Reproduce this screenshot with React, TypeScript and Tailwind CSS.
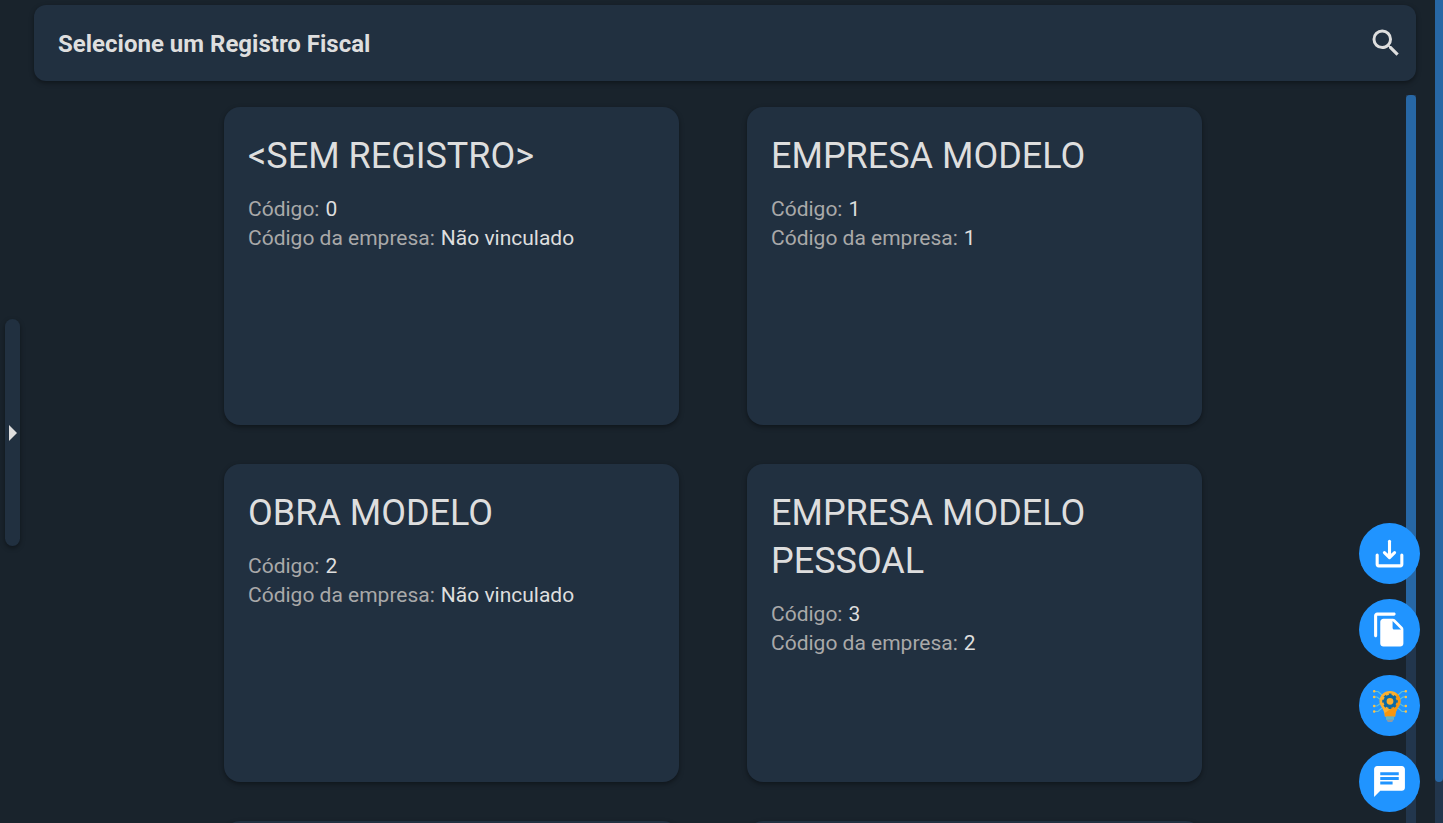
import { MdChat, MdSearch } from "react-icons/md";

type Registro = { nome: string; codigo: number; empresa: string };

const registros: Registro[] = [
  { nome: "<SEM REGISTRO>", codigo: 0, empresa: "Não vinculado" },
  { nome: "EMPRESA MODELO", codigo: 1, empresa: "1" },
  { nome: "OBRA MODELO", codigo: 2, empresa: "Não vinculado" },
  { nome: "EMPRESA MODELO PESSOAL", codigo: 3, empresa: "2" },
];

const surface = "bg-[#213040] shadow-[0_2px_5px_rgba(0,0,0,0.4)]";

function RegistroCard({ registro }: { registro: Registro }) {
  return (
    <button
      type="button"
      className={`flex min-h-[318px] cursor-pointer flex-col items-start rounded-2xl px-6 py-[25px] text-left ${surface}`}
    >
      <h2 className="text-4xl leading-[48px] text-[#dedede]">{registro.nome}</h2>
      <dl className="mt-[15px] text-[21px] leading-[29px] text-[#a9a9a9]">
        <div className="flex gap-[6px]">
          <dt>Código:</dt>
          <dd className="text-[#dedede]">{registro.codigo}</dd>
        </div>
        <div className="flex gap-[6px]">
          <dt>Código da empresa:</dt>
          <dd className="text-[#dedede]">{registro.empresa}</dd>
        </div>
      </dl>
    </button>
  );
}

function DownloadIcon() {
  return (
    <svg viewBox="0 0 24 24" className="size-[37px]" fill="none" stroke="currentColor" strokeWidth="2" strokeLinecap="round" strokeLinejoin="round">
      <path d="M4 13v6a1 1 0 0 0 1 1h14a1 1 0 0 0 1-1v-6" />
      <path d="M12 4v10" />
      <path d="M8.7 11.4 12 14.7l3.3-3.3" />
      <path d="M10.5 12.5h3L12 14.2z" fill="currentColor" strokeWidth="0.6" />
    </svg>
  );
}

function CopyIcon() {
  return (
    <svg viewBox="0 0 24 24" className="size-[37px]" fill="currentColor">
      <path d="M15 1H4c-1.1 0-2 .9-2 2v13c0 .55.45 1 1 1s1-.45 1-1V3h11c.55 0 1-.45 1-1s-.45-1-1-1z" />
      <path d="M15.59 5.59l4.83 4.83c.37.37.58.88.58 1.41V21c0 1.1-.9 2-2 2H7.99C6.89 23 6 22.1 6 21l.01-14c0-1.1.89-2 1.99-2h6.17c.53 0 1.04.21 1.42.59zM15 12h4.5L14 6.5V11c0 .55.45 1 1 1z" />
    </svg>
  );
}

function IdeaIcon() {
  return (
    <svg viewBox="0 0 36 36" className="size-9">
      <g fill="none" stroke="#5fc3dc" strokeWidth="1.1">
        <path d="M3 3.5h3l4 3.5M3 9h2l3 2.2h2M3 18h2l3-2.2h2M3 23.5h3l4-3.5" />
        <path d="M33 3.5h-3l-4 3.5M33 9h-2l-3 2.2h-2M33 18h-2l-3-2.2h-2M33 23.5h-3l-4-3.5" />
      </g>
      <g fill="#ffc043">
        <rect x="1" y="2" width="2.4" height="2.4" rx="1" />
        <rect x="1" y="7.8" width="2.4" height="2.4" rx="1" />
        <rect x="1" y="16.8" width="2.4" height="2.4" rx="1" />
        <rect x="1" y="22.3" width="2.4" height="2.4" rx="1" />
        <rect x="32.6" y="2" width="2.4" height="2.4" rx="1" />
        <rect x="32.6" y="7.8" width="2.4" height="2.4" rx="1" />
        <rect x="32.6" y="16.8" width="2.4" height="2.4" rx="1" />
        <rect x="32.6" y="22.3" width="2.4" height="2.4" rx="1" />
      </g>
      <path d="M18 3C11.900 3 7.500 7.500 7.500 13.300c0 5.200 5 7.300 5.400 15.200h10.200c.4-7.900 5.400-10 5.400-15.200C28.500 7.500 24.100 3 18 3z" fill="#fbb02f" />
      <path d="M24.500 5.200c.6 8-2.500 14.800-11.800 19.800.2 1 .2 2.200.2 3.500h10.200c.4-7.900 5.400-10 5.400-15.200 0-3.300-1.500-6.200-4-8.100z" fill="#f7960f" />
      <circle cx="18" cy="13.300" r="5" fill="none" stroke="#0c6aa5" strokeWidth="3.200" />
      <circle cx="18" cy="13.300" r="6.800" fill="none" stroke="#0c6aa5" strokeWidth="2" strokeDasharray="2.700 2.640" strokeDashoffset="1.350" />
      <path d="M14 28.500h8v3.300h-8z" fill="#5fb3c8" />
      <path d="M14.500 31.800h7l-1.300 2.200h-4.400z" fill="#8e9aa3" />
    </svg>
  );
}

const actions = [
  { label: "Baixar", icon: <DownloadIcon /> },
  { label: "Copiar", icon: <CopyIcon /> },
  { label: "Sugestões", icon: <IdeaIcon /> },
  { label: "Conversar", icon: <MdChat className="size-[37px]" /> },
];

export default function App() {
  return (
    <div className="flex h-screen overflow-hidden bg-[#19232c] font-[Roboto,sans-serif] text-[#dedede]">
      <aside className="flex flex-col justify-center pt-[42px] pr-[14px] pl-[5px]">
        <button
          type="button"
          aria-label="Abrir menu"
          className={`flex h-[227px] w-[15px] cursor-pointer items-center justify-center rounded-lg ${surface}`}
        >
          <svg viewBox="0 0 8 16" className="h-4 w-2" fill="#dedede">
            <path d="M0 0l8 8-8 8z" />
          </svg>
        </button>
      </aside>

      <main className="flex min-w-0 flex-1 flex-col gap-[14px] pt-[5px] pr-[19px]">
        <header className={`flex h-[76px] shrink-0 items-center justify-between rounded-xl pr-3 pl-6 ${surface}`}>
          <h1 className="pt-0.5 text-2xl font-bold">Selecione um Registro Fiscal</h1>
          <button type="button" aria-label="Pesquisar" className="cursor-pointer">
            <MdSearch className="size-9" />
          </button>
        </header>

        <div className="flex min-h-0 flex-1">
          <section className="min-w-0 flex-1 overflow-hidden pt-3 pr-[14px]">
            <div className="mx-auto grid max-w-[978px] grid-cols-2 gap-x-[68px] gap-y-[39px]">
              {registros.map((registro) => (
                <RegistroCard key={registro.codigo} registro={registro} />
              ))}
              <div className={`h-[318px] rounded-2xl ${surface}`} />
              <div className={`h-[318px] rounded-2xl ${surface}`} />
            </div>
          </section>
          <div className="w-[10px] shrink-0 bg-[#22364d]">
            <div className="h-[74%] rounded bg-[#2767a5]" />
          </div>
        </div>
      </main>

      <div className="w-2 shrink-0 bg-[#22364d]">
        <div className="h-[95%] rounded-b bg-[#2767a5]" />
      </div>

      <nav aria-label="Ações" className="fixed right-[23px] bottom-[11px] flex flex-col gap-[15px]">
        {actions.map((action) => (
          <button
            key={action.label}
            type="button"
            aria-label={action.label}
            className="flex size-[61px] cursor-pointer items-center justify-center rounded-full bg-[#2094ff] text-white"
          >
            {action.icon}
          </button>
        ))}
      </nav>
    </div>
  );
}
